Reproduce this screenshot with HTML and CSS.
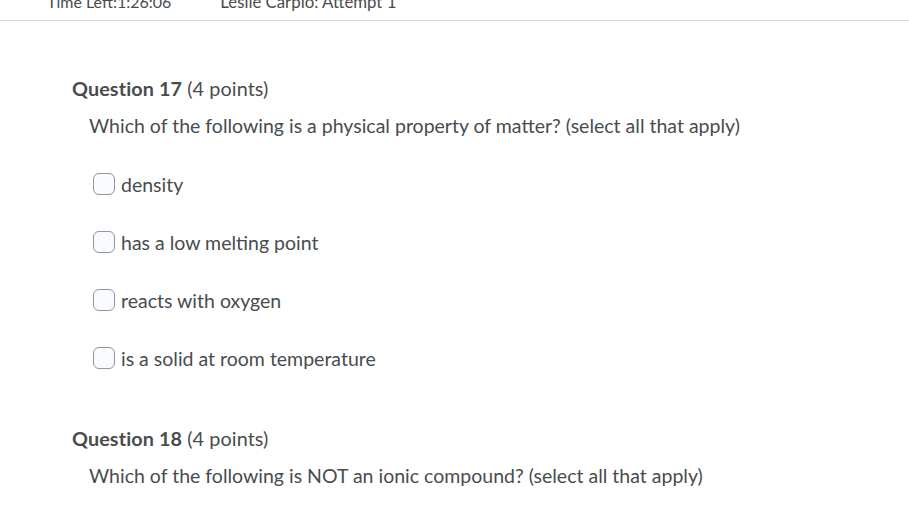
FILE: index.html
```html
<!DOCTYPE html>
<html>
<head>
<meta charset="utf-8">
<link rel="stylesheet" href="styles.css">
</head>
<body>
<div class="topbar">
  <span class="time">Time Left:1:26:06</span>
  <span class="user">Leslie Carpio: Attempt 1</span>
</div>
<div class="content">
  <div class="question">
    <h2 class="qtitle"><strong>Question 17</strong> (4 points)</h2>
    <p class="qtext">Which of the following is a physical property of matter? (select all that apply)</p>
    <ul class="options">
      <li class="option"><span class="box"></span><span>density</span></li>
      <li class="option"><span class="box"></span><span>has a low melting point</span></li>
      <li class="option"><span class="box"></span><span>reacts with oxygen</span></li>
      <li class="option"><span class="box"></span><span>is a solid at room temperature</span></li>
    </ul>
  </div>
  <div class="question">
    <h2 class="qtitle"><strong>Question 18</strong> (4 points)</h2>
    <p class="qtext">Which of the following is NOT an ionic compound? (select all that apply)</p>
  </div>
</div>
</body>
</html>
```
FILE: styles.css
```css
html, body {
  margin: 0;
  padding: 0;
  background: #fff;
  font-family: Lato, "Open Sans", sans-serif;
  color: #494c4e;
  overflow: hidden;
}
.topbar {
  height: 20px;
  border-bottom: 1px solid #d3d9e3;
  display: flex;
  align-items: flex-end;
  padding-left: 47px;
  font-size: 16px;
  line-height: 20px;
  overflow: hidden;
}
.topbar span {
  position: relative;
  top: -8px;
}
.user {
  margin-left: 49px;
  font-size: 16.8px;
}
.content {
  padding-left: 72px;
  padding-top: 55px;
}
.qtitle {
  margin: 0;
  font-size: 19.8px;
  font-weight: normal;
  line-height: 24px;
  letter-spacing: 0.1px;
}
.qtitle strong {
  font-weight: bold;
}
.qtext {
  margin: 14px 0 0 17px;
  font-size: 19.5px;
  line-height: 24px;
}
.options {
  list-style: none;
  margin: 34px 0 0 21px;
  padding: 0;
}
.option {
  display: flex;
  align-items: center;
  height: 24px;
  margin-bottom: 34px;
  font-size: 19.5px;
}
.option:last-child {
  margin-bottom: 56px;
}
.box {
  width: 22px;
  height: 22px;
  border: 1px solid #8f959b;
  border-radius: 6px;
  box-sizing: border-box;
  margin-right: 6px;
  background: #f9fbff;
}
```
